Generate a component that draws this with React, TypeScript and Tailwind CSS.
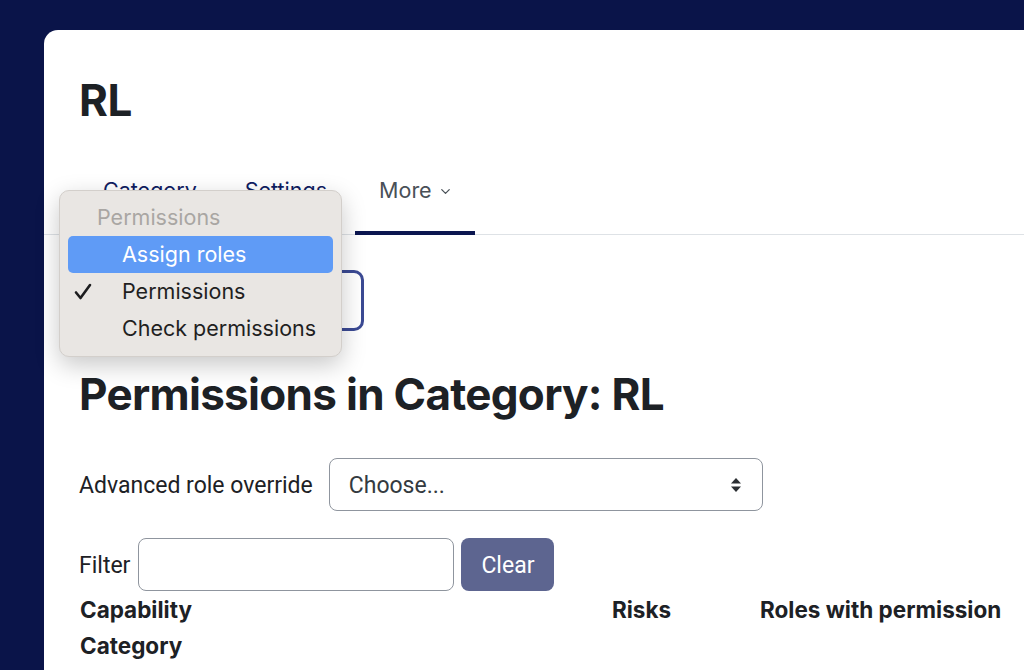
import React from 'react';
import { ChevronDown } from 'lucide-react';

const tabs = [
  { label: 'Category', active: false },
  { label: 'Settings', active: false },
  { label: 'More', active: true },
];

const menuItems = [
  { label: 'Assign roles', highlighted: true, checked: false },
  { label: 'Permissions', highlighted: false, checked: true },
  { label: 'Check permissions', highlighted: false, checked: false },
];

const SortArrows = () => (
  <svg width="12" height="18" viewBox="0 0 12 18">
    <path d="M6 2 L11 7.5 H1 Z" fill="#2b2f33" />
    <path d="M6 16 L11 10.5 H1 Z" fill="#2b2f33" />
  </svg>
);

const CheckMark = () => (
  <svg width="20" height="20" viewBox="0 0 20 20">
    <path d="M3 10.5 L7.5 16 L17 3" fill="none" stroke="#1d1d1f" strokeWidth="2.6" strokeLinecap="round" strokeLinejoin="round" />
  </svg>
);

const App = () => {
  return (
    <div className="relative min-h-[670px] h-[670px] overflow-hidden bg-[#0a1449] pt-[30px] pl-[44px] font-[Inter,sans-serif] text-[#1d2125]">
      <div className="h-full bg-white rounded-tl-[14px]">
        {/* page title */}
        <div className="px-[35px] pt-[44px]">
          <h1 className="text-[44px] leading-[52px] font-bold tracking-[-0.5px]">RL</h1>
        </div>

        {/* secondary navigation */}
        <div className="mt-[34px] flex border-b border-[#dee2e6] pl-[35px]">
          {tabs.map((tab) => (
            <div
              key={tab.label}
              className={`-mb-px flex items-center gap-1.5 pt-4 pb-[27px] border-b-4 text-[21.5px] leading-7 ${
                tab.active ? 'ml-1 pl-6 pr-[22px] border-[#0b1650] text-[#495057]' : 'px-6 border-transparent text-[#0f1d62]'
              }`}
            >
              <span>{tab.label}</span>
              {tab.active && <ChevronDown size={15} strokeWidth={2} className="mt-0.5" />}
            </div>
          ))}
        </div>

        <div className="px-[35px]">
          {/* tertiary navigation select (focused) */}
          <div className="mt-[35px] h-[61px] w-[285px] rounded-[10px] border-[3px] border-[#3b4a94]" />

          <h2 className="mt-[37px] text-[44px] leading-[52px] font-bold tracking-[-0.7px]">
            Permissions in Category: RL
          </h2>

          {/* advanced role override */}
          <div className="mt-[38px] flex items-center gap-4 font-[Roboto,sans-serif] text-[23px]">
            <label className="pt-1">Advanced role override</label>
            <div className="flex h-[53px] w-[434px] items-center justify-between rounded-lg border border-[#8f959e] pl-[19px] pr-[20px] text-[#343a40]">
              <span className="pt-1">Choose...</span>
              <SortArrows />
            </div>
          </div>

          {/* filter */}
          <div className="mt-[27px] flex items-center font-[Roboto,sans-serif] text-[23px]">
            <label className="mr-2 pt-1">Filter</label>
            <div className="h-[53px] w-[316px] rounded-lg border border-[#8f959e] bg-white" />
            <button className="ml-[7px] h-[53px] w-[93px] rounded-lg bg-[#5d6590] pt-1 text-white">Clear</button>
          </div>

          {/* table header */}
          <div className="mt-px grid grid-cols-[532px_148px_1fr] text-[22.5px] leading-[36px] font-bold pl-px">
            <div>Capability</div>
            <div>Risks</div>
            <div className="whitespace-nowrap">Roles with permission</div>
            <div>Category</div>
          </div>
        </div>
      </div>

      {/* native popup menu */}
      <div className="absolute left-[59px] top-[190px] w-[283px] rounded-[10px] border border-[#d3cfcb] bg-[#e9e6e3] px-2 pt-2 pb-[9px] shadow-[0_8px_24px_rgba(0,0,0,0.22)] text-[21.5px]">
        <div className="h-[37px] pl-[29px] leading-[37px] text-[#a9a6a3]">Permissions</div>
        {menuItems.map((item) => (
          <div
            key={item.label}
            className={`flex h-[37px] items-center rounded-[5px] ${
              item.highlighted ? 'bg-[#5f9bf6] text-white' : 'text-[#1f1f1f]'
            }`}
          >
            <span className="flex w-[54px] justify-start pl-[5px]">{item.checked && <CheckMark />}</span>
            <span>{item.label}</span>
          </div>
        ))}
      </div>
    </div>
  );
};

export default App;
